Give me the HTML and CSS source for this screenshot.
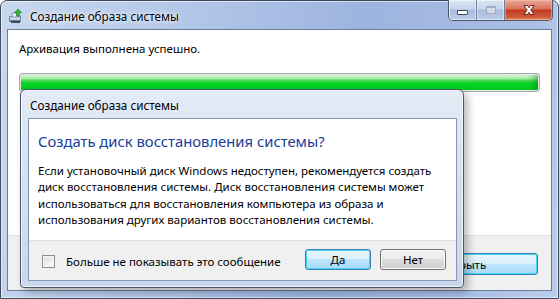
FILE: index.html
```html
<!DOCTYPE html>
<html lang="ru">
<head>
<meta charset="utf-8">
<title>Создание образа системы</title>
<link rel="stylesheet" href="styles.css">
</head>
<body>
<div class="win">
  <div class="titlebar">
    <svg class="app-icon" width="16" height="16" viewBox="0 0 16 16">
      <rect x="1" y="8" width="12" height="6" rx="1" fill="#6c7e9c"/>
      <rect x="2" y="9" width="10" height="3" fill="#c9d4e4"/>
      <rect x="3" y="13" width="9" height="2" fill="#3d4c66"/>
      <rect x="4" y="5" width="6" height="4" fill="#e6ecf4" stroke="#7b8aa3" stroke-width="0.8"/>
      <path d="M10 1 L13.5 4.5 L11.5 4.5 L11.5 8 L8.5 8 L8.5 4.5 L6.5 4.5 Z" fill="#2fb53a" stroke="#137a1e" stroke-width="0.6"/>
    </svg>
    <span class="title">Создание образа системы</span>
    <div class="controls">
      <div class="ctl ctl-min"><span class="min-glyph"></span></div>
      <div class="ctl ctl-max"><span class="max-glyph"></span></div>
      <div class="ctl ctl-close">
        <svg width="16" height="12" viewBox="0 0 16 12">
          <path d="M3 1.5 L6.5 1.5 L8 3.8 L9.5 1.5 L13 1.5 L9.8 6 L13 10.5 L9.5 10.5 L8 8.2 L6.5 10.5 L3 10.5 L6.2 6 Z" fill="#fff" stroke="#5b1a12" stroke-width="0.9" stroke-linejoin="round"/>
        </svg>
      </div>
    </div>
  </div>
  <div class="client">
    <div class="content">
      <p class="status">Архивация выполнена успешно.</p>
      <div class="progress"><div class="fill"></div></div>
    </div>
    <div class="footer">
      <button class="btn btn-close">Закрыть</button>
    </div>
  </div>

  <div class="dialog">
    <div class="dlg-title">Создание образа системы</div>
    <div class="dlg-client">
      <div class="dlg-body">
        <h1 class="dlg-heading">Создать диск восстановления системы?</h1>
        <p class="dlg-text">Если установочный диск Windows недоступен, рекомендуется создать диск восстановления системы. Диск восстановления системы может использоваться для восстановления компьютера из образа и использования других вариантов восстановления системы.</p>
      </div>
      <div class="dlg-footer">
        <label class="check"><span class="box"></span><span>Больше не показывать это сообщение</span></label>
        <div class="dlg-buttons">
          <button class="btn btn-default">Да</button>
          <button class="btn">Нет</button>
        </div>
      </div>
    </div>
  </div>
</div>
</body>
</html>
```
FILE: styles.css
```css
* { box-sizing: border-box; }
html, body { margin: 0; padding: 0; }
body {
  width: 559px; height: 299px; overflow: hidden;
  background: #fff;
  font-family: "Noto Sans", "Open Sans", sans-serif;
  font-size: 11.5px;
  color: #000;
}
.win {
  position: relative;
  width: 559px; height: 299px;
  border: 1px solid #3e4a5c;
  border-radius: 7px 7px 0 0;
  background: linear-gradient(100deg, #c8d8ef 0%, #b3c7e8 30%, #9db4df 60%, #a9bde3 85%, #bccdeb 100%);
  box-shadow: inset 0 0 0 1px rgba(255,255,255,0.55);
  display: flex; flex-direction: column;
  padding: 0 6px 7px 6px;
}
.titlebar {
  height: 28px;
  display: flex; align-items: center;
  position: relative;
}
.app-icon { margin-left: 1px; margin-top: 1px; }
.title {
  margin-left: 6px; margin-top: 1px;
  font-size: 11.7px; color: #000;
  text-shadow: 0 0 6px #fff, 0 0 3px #fff;
}
.controls {
  position: absolute; right: -1px; top: -1px;
  display: flex; height: 21px;
  border: 1px solid #4d5a70; border-top: none;
  border-radius: 0 0 5px 5px;
  overflow: hidden;
}
.ctl { height: 20px; display: flex; align-items: center; justify-content: center; }
.ctl-min, .ctl-max {
  width: 28px;
  background: linear-gradient(#dbe5f3 0%, #c6d5eb 45%, #a9bcdc 50%, #bccde8 100%);
  border-right: 1px solid #6d7b93;
  box-shadow: inset 0 0 0 1px rgba(255,255,255,0.5);
}
.ctl-close {
  width: 47px;
  background: linear-gradient(#e9a898 0%, #d7705a 45%, #c2391f 50%, #cf5a3b 85%, #e58b63 100%);
  box-shadow: inset 0 0 0 1px rgba(255,200,180,0.5);
}
.min-glyph {
  width: 11px; height: 5px; margin-top: 4px;
  background: #fff; border: 1px solid #3e4a5e; border-radius: 1px;
}
.max-glyph {
  width: 10px; height: 8px;
  border: 1px solid #9aa6b8; border-top-width: 2px;
  background: #d7dfea;
  opacity: 0.85;
}
.client {
  flex: 1;
  border: 1px solid #6c7d99;
  background: #fff;
  display: flex; flex-direction: column;
}
.content { height: 205px; padding: 11px 11px 0 11px; }
.status { margin: 0; line-height: 16px; }
.progress {
  margin-top: 16px;
  height: 19px;
  border: 1px solid #a4aab2;
  border-radius: 3px;
  padding: 1px;
  background: #e6e6e6;
}
.fill {
  height: 100%;
  border-radius: 1px;
  background: linear-gradient(#d5f8d5 0%, #aef0ae 20%, #3cd64a 40%, #04d424 55%, #03cc20 100%);
  box-shadow: inset -8px 0 6px -4px rgba(0,80,0,0.35);
}
.footer {
  flex: 1;
  background: #f0f0f0;
  border-top: 1px solid #dfdfdf;
  display: flex; justify-content: flex-end; align-items: flex-start;
  padding: 17px 13px 0 0;
}
.btn {
  font-family: inherit; font-size: 11.5px; color: #000;
  height: 22px;
  border: 1px solid #707070;
  border-radius: 3px;
  background: linear-gradient(#f2f2f2 0%, #ebebeb 48%, #dddddd 50%, #cfcfcf 100%);
  box-shadow: inset 0 0 0 1px #fbfbfb;
  padding: 0;
}
.btn-close {
  width: 150px;
  border-color: #3c7fb1;
  box-shadow: inset 0 0 0 1px #48d6f8;
  background: linear-gradient(#eaf6fd 0%, #d9f0fc 48%, #bee6fd 50%, #a7d9f5 100%);
}
.dialog {
  position: absolute;
  left: 19px; top: 88px;
  width: 444px; height: 199px;
  border: 1px solid #4a5566;
  border-radius: 6px 6px 4px 4px;
  background: linear-gradient(180deg, #e3ebf6 0%, #d6e2f2 40%, #c8d7ec 100%);
  box-shadow: inset 0 0 0 1px rgba(255,255,255,0.7), 4px 4px 8px rgba(0,0,0,0.28);
  display: flex; flex-direction: column;
  padding: 0 6px 6px 7px;
}
.dlg-title {
  height: 28px;
  display: flex; align-items: center;
  padding-left: 2px; padding-top: 2px;
  font-size: 11.7px; color: #000;
}
.dlg-client {
  flex: 1;
  border: 1px solid #8797b1;
  background: #fff;
  display: flex; flex-direction: column;
}
.dlg-body { height: 121px; padding: 11px 9px 0 9px; }
.dlg-heading {
  margin: 0;
  font-weight: normal;
  font-size: 14.8px;
  line-height: 22px;
  color: #1a3d99;
}
.dlg-text { margin: 11px 0 0 0; line-height: 16.3px; }
.dlg-footer {
  flex: 1;
  background: #f0f0f0;
  border-top: 1px solid #dfdfdf;
  display: flex; align-items: center; justify-content: space-between;
  padding: 0 10px 0 13px;
}
.check { display: flex; align-items: center; gap: 11px; margin-top: 2px; }
.box {
  width: 13px; height: 13px;
  border: 1px solid #8e8f8f;
  background: linear-gradient(135deg, #dcdcdc 0%, #f4f4f4 70%, #fff 100%);
  box-shadow: inset 0 0 0 1px #f5f5f5;
}
.dlg-buttons { display: flex; gap: 9px; margin-top: -2px; }
.dlg-buttons .btn { width: 66px; height: 21px; }
.btn-default {
  border-color: #3c7fb1;
  box-shadow: inset 0 0 0 1px #48d6f8;
  background: linear-gradient(#eaf6fd 0%, #d9f0fc 48%, #bee6fd 50%, #a7d9f5 100%);
}
```
